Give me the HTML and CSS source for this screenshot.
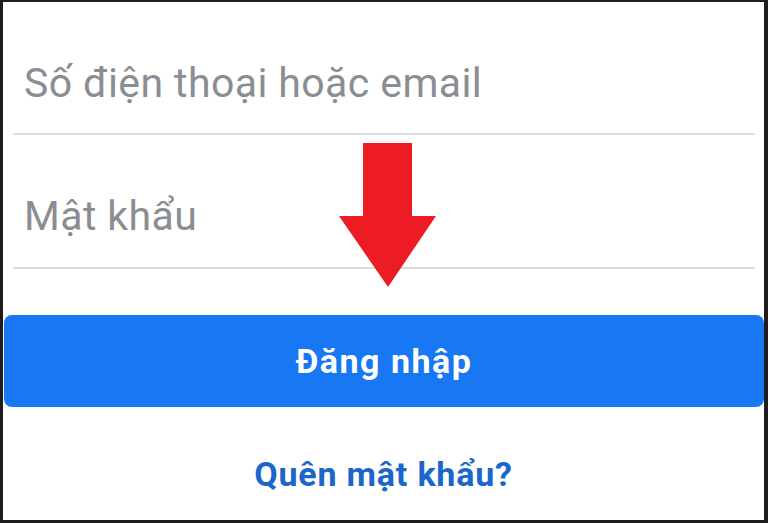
FILE: index.html
```html
<!doctype html>
<html lang="vi">

<head>
    <meta charset="utf-8">
    <title>Đăng nhập</title>
    <meta name="viewport" content="width=device-width, initial-scale=1">
    <link rel="stylesheet" href="styles.css">
</head>

<body>
    <div class="frame">
        <div class="field field-first">
            <div class="placeholder">Số điện thoại hoặc email</div>
        </div>
        <div class="field">
            <div class="placeholder">Mật khẩu</div>
        </div>
        <div class="btn-login">Đăng nhập</div>
        <div class="forgot">Quên mật khẩu?</div>

        <svg class="arrow" width="97" height="144" viewBox="0 0 97 144">
            <polygon points="24,0 73,0 73,73 97,73 49,144 0,73 24,73" fill="#ed1c24" />
        </svg>
    </div>
</body>

</html>
```

FILE: styles.css
```css
html,
body {
    margin: 0;
    padding: 0;
    background: white;
    font-family: Roboto, 'Liberation Sans', sans-serif;
}

.frame {
    position: relative;
    box-sizing: border-box;
    width: 768px;
    height: 523px;
    border: 3px solid #1e1e1e;
    border-top-width: 2px;
    border-right-width: 4px;
    background: #fff;
}

.field {
    margin: 0 9px 0 10px;
    padding: 57px 0 27px 11px;
    border-bottom: 2px solid #dcdcdc;
}

.field-first {
    padding-top: 57px;
    padding-bottom: 26px;
}

.placeholder {
    font-size: 41px;
    line-height: 48px;
    letter-spacing: 0.4px;
    color: #8a8d91;
}

.btn-login {
    margin: 46px 0 0 1px;
    height: 92px;
    border-radius: 8px;
    background: #1877f2;
    color: #fff;
    font-size: 34px;
    letter-spacing: 1.5px;
    font-weight: bold;
    display: flex;
    align-items: center;
    justify-content: center;
}

.forgot {
    margin-top: 48px;
    text-align: center;
    font-size: 34px;
    line-height: 38px;
    letter-spacing: 0.8px;
    font-weight: bold;
    color: #1b66cb;
}

.arrow {
    position: absolute;
    left: 336px;
    top: 141px;
}
```
